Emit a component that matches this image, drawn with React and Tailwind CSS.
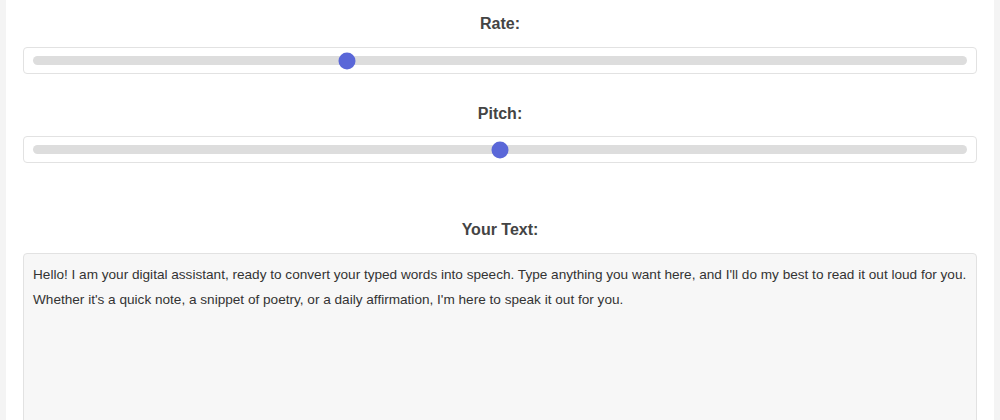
import React from 'react';

const Slider = ({ value }) => (
  <div className="rounded border border-[#e2e2e2] bg-white px-[9px] py-[8px]">
    <div className="relative h-[9px] rounded-full bg-[#dddddd]">
      <div
        className="absolute top-1/2 h-[17px] w-[17px] -translate-x-1/2 -translate-y-1/2 rounded-full bg-[#5a67d8]"
        style={{ left: `calc(8.5px + ${value} * (100% - 17px))` }}
      />
    </div>
  </div>
);

const Label = ({ children }) => (
  <h2 className="text-center text-[16px] font-bold leading-[19px] text-[#444]">{children}</h2>
);

const App = () => {
  return (
    <div className="min-h-screen bg-[#f4f4f4] px-[6px] font-['Liberation_Sans',Arial,sans-serif]">
      <div className="min-h-[420px] bg-white px-[17px] pt-[14px]">
        <Label>Rate:</Label>
        <div className="mt-[14px]">
          <Slider value={1 / 3} />
        </div>
        <div className="mt-[30px]">
          <Label>Pitch:</Label>
        </div>
        <div className="mt-[13px]">
          <Slider value={0.5} />
        </div>
        <div className="mt-[57px]">
          <Label>Your Text:</Label>
        </div>
        <div className="mt-[14px] h-[200px] rounded border border-[#e2e2e2] bg-[#f7f7f7] px-[9px] pt-[8px] text-[13.6px] leading-[25px] text-[#333]">
          Hello! I am your digital assistant, ready to convert your typed words into speech. Type anything you want here, and I'll do my best to read it out loud for you. Whether it's a quick note, a snippet of poetry, or a daily affirmation, I'm here to speak it out for you.
        </div>
      </div>
    </div>
  );
};

export default App;
